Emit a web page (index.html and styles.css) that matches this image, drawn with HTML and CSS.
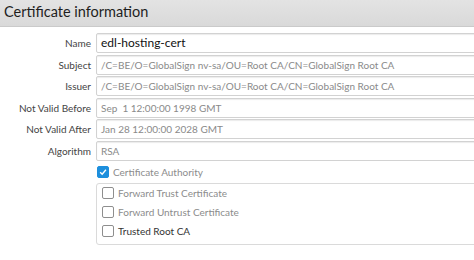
FILE: index.html
```html
<!DOCTYPE html>
<html lang="en">
<head>
    <meta charset="UTF-8">
    <title>Certificate information</title>
    <link rel="stylesheet" href="styles.css">
</head>
<body>
    <div class="header">
        <h2>Certificate information</h2>
    </div>
    <div class="form">
        <div class="row">
            <label>Name</label>
            <div class="field name">edl-hosting-cert</div>
        </div>
        <div class="row">
            <label>Subject</label>
            <div class="field disabled">/C=BE/O=GlobalSign nv-sa/OU=Root CA/CN=GlobalSign Root CA</div>
        </div>
        <div class="row">
            <label>Issuer</label>
            <div class="field disabled">/C=BE/O=GlobalSign nv-sa/OU=Root CA/CN=GlobalSign Root CA</div>
        </div>
        <div class="row">
            <label>Not Valid Before</label>
            <div class="field disabled">Sep&nbsp; 1 12:00:00 1998 GMT</div>
        </div>
        <div class="row">
            <label>Not Valid After</label>
            <div class="field disabled">Jan 28 12:00:00 2028 GMT</div>
        </div>
        <div class="row">
            <label>Algorithm</label>
            <div class="field disabled">RSA</div>
        </div>
        <div class="row row-check">
            <span></span>
            <div class="check disabled">
                <span class="box checked">
                    <svg viewBox="0 0 12 12" width="12" height="12"><path d="M2.6 6.3 L5 8.7 L9.5 3.3" fill="none" stroke="#fff" stroke-width="1.6"/></svg>
                </span>
                Certificate Authority
            </div>
        </div>
        <div class="row">
            <span></span>
            <div class="group">
                <div class="check disabled"><span class="box"></span>Forward Trust Certificate</div>
                <div class="check disabled"><span class="box"></span>Forward Untrust Certificate</div>
                <div class="check"><span class="box"></span>Trusted Root CA</div>
            </div>
        </div>
    </div>
</body>
</html>
```

FILE: styles.css
```css
body {
    font-family: Lato, "Open Sans", sans-serif;
    margin: 0;
    padding: 0;
    background-color: white;
    width: 474px;
    height: 260px;
    overflow: hidden;
    color: #333;
}
.header {
    height: 26px;
    background: linear-gradient(#e3e3e3, #d9d9d9);
    border-bottom: 1px solid #cacaca;
    padding-left: 4px;
}
.header h2 {
    margin: 0;
    font-size: 14.5px;
    font-weight: normal;
    line-height: 24px;
    color: #1e1e1e;
}
.form {
    width: 560px;
    padding-top: 6px;
}
.row {
    display: grid;
    grid-template-columns: 91px 1fr;
    column-gap: 5px;
    align-items: center;
    margin-bottom: 1.6px;
}
.row label {
    text-align: right;
    font-size: 10px;
    color: #444;
}
.field {
    height: 18px;
    line-height: 18px;
    border: 1px solid #d2d2d2;
    border-radius: 2px;
    box-shadow: inset 0 1px 1px rgba(0,0,0,0.08);
    padding: 0 4px;
    font-size: 10px;
    color: #222;
    white-space: nowrap;
}
.field.name {
    font-size: 12px;
    color: #111;
}
.field.disabled {
    color: #8a8a8a;
}
.row-check {
    margin-top: 1px;
    margin-bottom: 1px;
}
.check {
    display: flex;
    align-items: center;
    height: 19px;
    font-size: 10px;
    color: #333;
}
.check.disabled {
    color: #8c8c8c;
}
.box {
    width: 10px;
    height: 10px;
    border: 1px solid #8e8e8e;
    border-radius: 2px;
    margin-right: 4px;
    background-color: white;
    display: flex;
    align-items: center;
    justify-content: center;
}
.box.checked {
    background-color: #1d8fdd;
    border-color: #1d8fdd;
}
.row > .check {
    padding-left: 1px;
}
.group {
    border: 1px solid #dadada;
    border-radius: 3px;
    padding: 0 5px 3px;
}
```
